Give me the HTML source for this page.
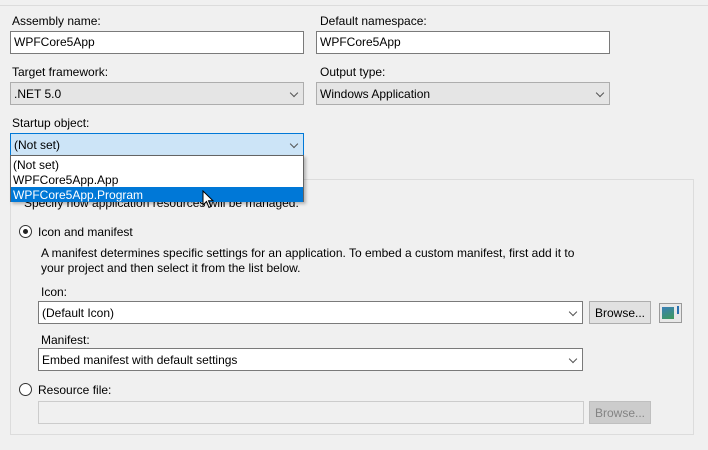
<!DOCTYPE html>
<html><head><meta charset="utf-8"><style>
*{box-sizing:border-box;margin:0;padding:0}
body{width:708px;height:450px;background:#f0f0f0;font-family:"Liberation Sans",sans-serif;font-size:12px;color:#000;position:relative;overflow:hidden}
.a{position:absolute;white-space:nowrap}
.tb{position:absolute;background:#fff;border:1px solid #7a7a7a;height:23px;padding:3px 0 0 3px}
.cb{position:absolute;background:#e5e5e5;border:1px solid #adadad;height:23px;padding:4px 0 0 3px}
.cbw{position:absolute;background:#fff;border:1px solid #7a7a7a;height:23px;padding:4px 0 0 3px}
.chev{position:absolute;right:6px;top:7px;width:6px;height:6px;border-right:1px solid #555;border-bottom:1px solid #555;transform:rotate(45deg)}
.btn{position:absolute;background:#e1e1e1;border:1px solid #adadad;height:23px;text-align:center;padding-top:4px}
</style></head><body>
<div class="a" style="left:0;top:5px;width:708px;height:1px;background:#dcdcdc"></div>
<div class="a" style="left:12px;top:14px">Assembly name:</div>
<div class="tb" style="left:10px;top:31px;width:294px">WPFCore5App</div>
<div class="a" style="left:320px;top:14px">Default namespace:</div>
<div class="tb" style="left:316px;top:31px;width:294px">WPFCore5App</div>
<div class="a" style="left:12px;top:65px">Target framework:</div>
<div class="cb" style="left:10px;top:82px;width:294px">.NET 5.0<div class="chev"></div></div>
<div class="a" style="left:320px;top:65px">Output type:</div>
<div class="cb" style="left:316px;top:82px;width:294px">Windows Application<div class="chev"></div></div>
<div class="a" style="left:12px;top:116px">Startup object:</div>

<div class="a" style="left:10px;top:179px;width:684px;height:256px;border:1px solid #dcdcdc"></div>
<div class="a" style="left:24px;top:196px;color:#000">Specify how application resources will be managed:</div>
<div class="a" style="left:19px;top:225px;width:13px;height:13px;border:1px solid #333;border-radius:50%;background:#fff"><div style="position:absolute;left:3px;top:3px;width:5px;height:5px;border-radius:50%;background:#222"></div></div>
<div class="a" style="left:38px;top:225px">Icon and manifest</div>
<div class="a" style="left:41px;top:246px">A manifest determines specific settings for an application. To embed a custom manifest, first add it to</div>
<div class="a" style="left:41px;top:261px">your project and then select it from the list below.</div>
<div class="a" style="left:41px;top:285px">Icon:</div>
<div class="cbw" style="left:38px;top:301px;width:545px">(Default Icon)<div class="chev"></div></div>
<div class="btn" style="left:589px;top:301px;width:62px">Browse...</div>
<div class="a" style="left:659px;top:303px;width:23px;height:20px;border:1px solid #9a9a9a;background:#e8e8e8">
<div style="position:absolute;left:2px;top:3px;width:12px;height:12px;background:linear-gradient(160deg,#3a7fb8,#3e9a5a)"></div>
<div style="position:absolute;left:17px;top:2px;width:2px;height:8px;background:#2a6fb0"></div></div>
<div class="a" style="left:41px;top:333px">Manifest:</div>
<div class="cbw" style="left:38px;top:348px;width:545px">Embed manifest with default settings<div class="chev"></div></div>
<div class="a" style="left:19px;top:383px;width:13px;height:13px;border:1px solid #333;border-radius:50%;background:#fff"></div>
<div class="a" style="left:38px;top:383px">Resource file:</div>
<div class="a" style="left:38px;top:401px;width:546px;height:23px;border:1px solid #ccc;background:#f0f0f0"></div>
<div class="btn" style="left:589px;top:401px;width:62px;background:#ccc;border-color:#bfbfbf;color:#838383">Browse...</div>

<div class="a" style="left:10px;top:133px;width:294px;height:23px;background:#cce4f7;border:1px solid #0078d7;padding:4px 0 0 3px">(Not set)<div class="chev"></div></div>
<div class="a" style="left:10px;top:155px;width:294px;height:47px;background:#fff;border:1px solid #646464;box-shadow:2px 2px 3px rgba(0,0,0,.25)">
<div style="position:absolute;left:2px;top:2px">(Not set)</div>
<div style="position:absolute;left:2px;top:17px">WPFCore5App.App</div>
<div style="position:absolute;left:0;top:31px;width:292px;height:15px;background:#0078d7;color:#fff;padding:1px 0 0 2px">WPFCore5App.Program</div>
</div>
<svg class="a" style="left:202px;top:190px" width="14" height="20" viewBox="0 0 14 20"><path d="M1 1 L1 15 L4.5 11.5 L7 17.5 L9 16.5 L6.5 10.8 L11 10.8 Z" fill="#fff" stroke="#000" stroke-width="1"/></svg>
</body></html>
